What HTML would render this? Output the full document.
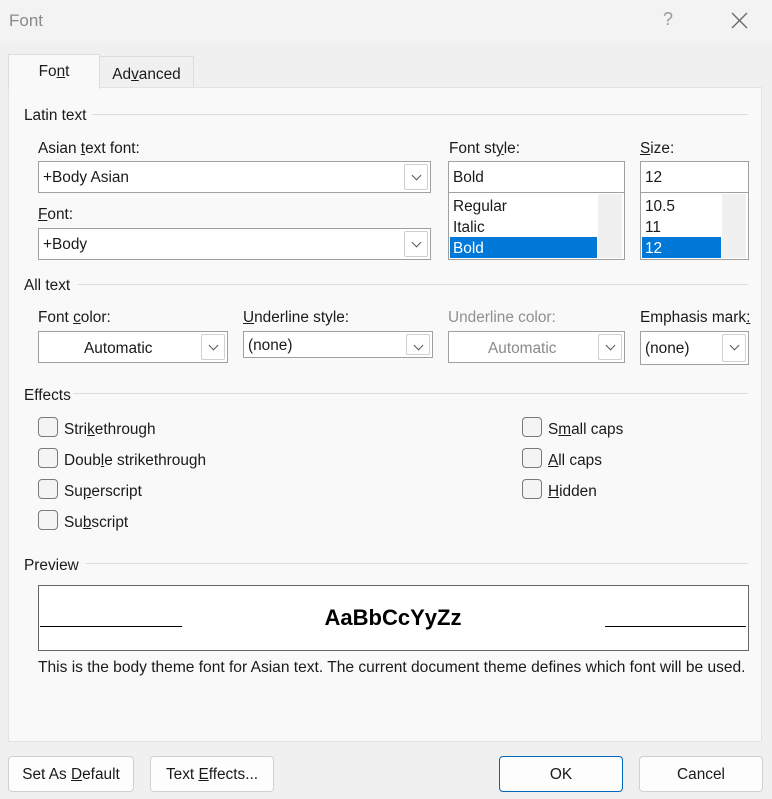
<!DOCTYPE html>
<html><head><meta charset="utf-8"><style>
*{box-sizing:border-box;margin:0;padding:0}
body{width:772px;height:799px;background:#f0f0f0;font-family:"Liberation Sans",sans-serif;font-size:15.4px;color:#1a1a1a;position:relative;overflow:hidden}
.a{position:absolute;white-space:nowrap}
.title{background:#f3f3f3;height:43px;left:0;top:0;width:772px}
.panel{left:8px;top:87px;width:754px;height:655px;background:#f9f9f9;border:1px solid #e3e3e3}
.tab{border:1px solid #dcdcdc;border-bottom:none;text-align:center;line-height:34px}
.line{height:1px;background:#dcdcdc}
.box{background:#fff;border:1px solid #a0a0a0}
.dd{position:absolute;right:2px;top:2px;bottom:2px;width:24px;border:1px solid #d0d0d0;background:#fff;border-radius:2px}
.dd:after{content:"";position:absolute;left:8px;top:7px;width:6px;height:6px;border-right:1px solid #555;border-bottom:1px solid #555;transform:rotate(45deg)}
.txt{position:absolute;left:4px;top:50%;transform:translateY(-45%)}
.cb{width:20px;height:20px;border:1px solid #7a7a7a;border-radius:4px;background:#f4f4f4}
.btn{border:1px solid #d0d0d0;border-radius:4px;background:#fdfdfd;text-align:center;line-height:36px}
u{text-decoration:underline}
</style></head><body>
<div class="a title"></div>
<div class="a" style="left:9px;top:11px;font-size:17px;color:#8a8a8a">Font</div>
<div class="a" style="left:663px;top:9px;font-size:18px;color:#999">?</div>
<svg class="a" style="left:731px;top:12px" width="17" height="17"><path d="M1 1L16 16M16 1L1 16" stroke="#666" stroke-width="1.3"/></svg>

<div class="a panel"></div>
<div class="a tab" style="left:8px;top:54px;width:92px;height:35px;background:#f9f9f9">Fo<u>n</u>t</div>
<div class="a tab" style="left:99px;top:56px;width:95px;height:31px;background:#f0f0f0;line-height:35px">Ad<u>v</u>anced</div>

<div class="a" style="left:24px;top:107px">Latin text</div>
<div class="a line" style="left:92px;top:114px;width:656px"></div>
<div class="a" style="left:38px;top:140px">Asian <u>t</u>ext font:</div>
<div class="a box" style="left:38px;top:161px;width:393px;height:32px"><span class="txt">+Body Asian</span><div class="dd"></div></div>
<div class="a" style="left:38px;top:206px"><u>F</u>ont:</div>
<div class="a box" style="left:38px;top:228px;width:393px;height:32px"><span class="txt">+Body</span><div class="dd"></div></div>

<div class="a" style="left:449px;top:140px">Font st<u>y</u>le:</div>
<div class="a box" style="left:448px;top:161px;width:177px;height:32px"><span class="txt">Bold</span></div>
<div class="a box" style="left:448px;top:192px;width:177px;height:68px">
<div class="a" style="left:149px;top:1px;width:24px;height:64px;background:#f0f0f0"></div>
<div class="a" style="left:4px;top:5px">Regular</div>
<div class="a" style="left:4px;top:26px">Italic</div>
<div class="a" style="left:1px;top:44px;width:147px;height:21px;background:#0078d7;color:#fff;padding:3px 3px">Bold</div>
</div>
<div class="a" style="left:640px;top:140px"><u>S</u>ize:</div>
<div class="a box" style="left:640px;top:161px;width:109px;height:32px"><span class="txt">12</span></div>
<div class="a box" style="left:640px;top:192px;width:109px;height:68px">
<div class="a" style="left:81px;top:1px;width:24px;height:64px;background:#f0f0f0"></div>
<div class="a" style="left:4px;top:5px">10.5</div>
<div class="a" style="left:4px;top:26px">11</div>
<div class="a" style="left:1px;top:44px;width:79px;height:21px;background:#0078d7;color:#fff;padding:3px 3px">12</div>
</div>

<div class="a" style="left:24px;top:277px">All text</div>
<div class="a line" style="left:78px;top:284px;width:670px"></div>
<div class="a" style="left:38px;top:309px">Font <u>c</u>olor:</div>
<div class="a box" style="left:38px;top:331px;width:190px;height:32px"><span class="a" style="left:45px;top:8px">Automatic</span><div class="dd"></div></div>
<div class="a" style="left:243px;top:309px"><u>U</u>nderline style:</div>
<div class="a box" style="left:243px;top:331px;width:190px;height:27px"><span class="txt">(none)</span><div class="dd"></div></div>
<div class="a" style="left:448px;top:309px;color:#8f8f8f">Underline color:</div>
<div class="a box" style="left:448px;top:331px;width:177px;height:32px"><span class="a" style="left:39px;top:8px;color:#8a8a8a">Automatic</span><div class="dd"></div></div>
<div class="a" style="left:640px;top:309px">Emphasis mark<u>:</u></div>
<div class="a box" style="left:640px;top:331px;width:109px;height:34px"><span class="txt">(none)</span><div class="dd"></div></div>

<div class="a" style="left:24px;top:387px">Effects</div>
<div class="a line" style="left:73px;top:393px;width:675px"></div>
<div class="a cb" style="left:38px;top:417px"></div><div class="a" style="left:64px;top:421px">Stri<u>k</u>ethrough</div>
<div class="a cb" style="left:38px;top:448px"></div><div class="a" style="left:64px;top:452px">Doub<u>l</u>e strikethrough</div>
<div class="a cb" style="left:38px;top:479px"></div><div class="a" style="left:64px;top:483px">Su<u>p</u>erscript</div>
<div class="a cb" style="left:38px;top:510px"></div><div class="a" style="left:64px;top:514px">Su<u>b</u>script</div>
<div class="a cb" style="left:522px;top:417px"></div><div class="a" style="left:548px;top:421px">S<u>m</u>all caps</div>
<div class="a cb" style="left:522px;top:448px"></div><div class="a" style="left:548px;top:452px"><u>A</u>ll caps</div>
<div class="a cb" style="left:522px;top:479px"></div><div class="a" style="left:548px;top:483px"><u>H</u>idden</div>

<div class="a" style="left:24px;top:557px">Preview</div>
<div class="a line" style="left:86px;top:563px;width:662px"></div>
<div class="a" style="left:38px;top:585px;width:711px;height:66px;background:#fff;border:1px solid #666"></div>
<div class="a" style="left:40px;top:626px;width:142px;height:1px;background:#000"></div>
<div class="a" style="left:605px;top:626px;width:141px;height:1px;background:#000"></div>
<div class="a" style="left:293px;top:605px;width:200px;text-align:center;font-weight:bold;font-size:22px;color:#000">AaBbCcYyZz</div>
<div class="a" style="left:38px;top:659px;font-size:15.55px">This is the body theme font for Asian text. The current document theme defines which font will be used.</div>

<div class="a btn" style="left:8px;top:756px;width:126px;height:36px">Set As <u>D</u>efault</div>
<div class="a btn" style="left:150px;top:756px;width:124px;height:36px">Text <u>E</u>ffects...</div>
<div class="a btn" style="left:499px;top:756px;width:124px;height:36px;border-color:#0067c0">OK</div>
<div class="a btn" style="left:639px;top:756px;width:124px;height:36px">Cancel</div>
</body></html>
